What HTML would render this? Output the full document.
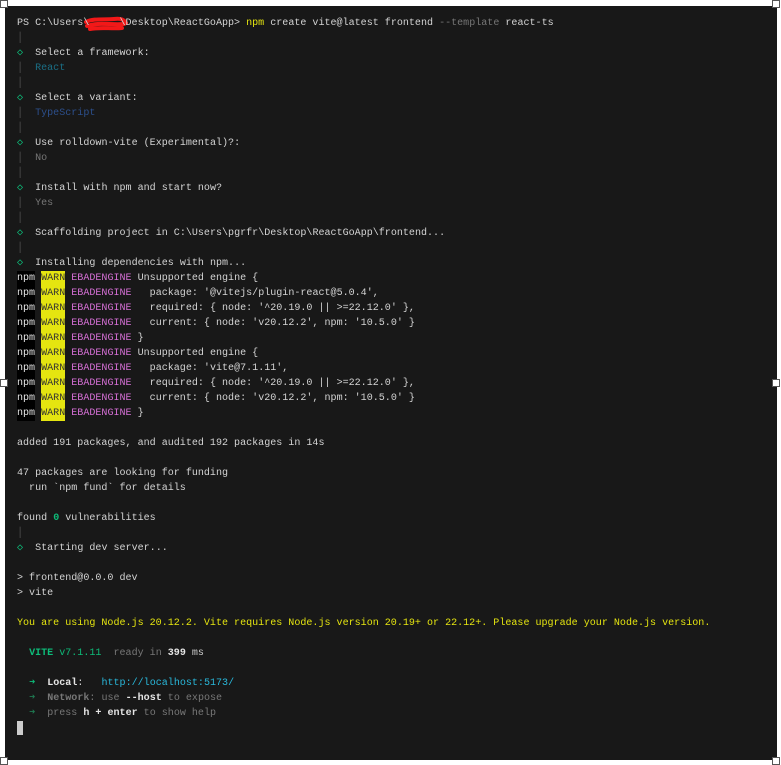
<!DOCTYPE html><html><head><style>
html,body{margin:0;padding:0;background:#fff;width:781px;height:765px;overflow:hidden}
#t{position:absolute;left:5px;top:6px;width:772px;height:754px;background:#181818}
pre{position:absolute;left:17px;top:16px;margin:0;font-family:"Liberation Mono",monospace;font-size:10.05px;line-height:15px;color:#d4d4d4;white-space:pre}
.g{color:#555}.d{color:#0dbc79}.c{color:#1b6f86}.b{color:#2c4f8c}.m{color:#767676}
.y{color:#e5e510}.n{background:#000;color:#e5e5e5;display:inline-block;height:15px}.w{background:#e5e510;color:#333;display:inline-block;height:15px}.p{color:#d670d6}
.B{font-weight:bold;color:#e5e5e5}.gr{color:#0dbc79}.u{color:#29b8db}.dm{color:#777}.da{color:#1f7a52}
.cur{display:inline-block;width:6px;height:14px;background:#ccc;vertical-align:-3px}
.h{position:absolute;width:6px;height:6px;border:1px solid #555;background:#fff}
</style></head><body>
<div id="t"></div>
<div class="h" style="left:0;top:0"></div><div class="h" style="left:772px;top:0"></div>
<div class="h" style="left:0;top:379px"></div><div class="h" style="left:772px;top:379px"></div>
<div class="h" style="left:0;top:757px"></div><div class="h" style="left:772px;top:757px"></div>
<svg style="position:absolute;left:84px;top:16px" width="44" height="16"><path d="M2 6 C10 2 20 4 30 3 S40 5 42 7 M3 10 C14 6 26 9 40 8 M6 13 C16 11 28 13 38 12" stroke="#f21818" stroke-width="4" fill="none" stroke-linecap="round"/></svg>
<pre>PS C:\Users\     \Desktop\ReactGoApp&gt; <span class="y">npm</span> create vite@latest frontend <span class="m">--template</span> react-ts
<span class="g">│</span>
<span class="d">◇</span>  Select a framework:
<span class="g">│</span>  <span class="c">React</span>
<span class="g">│</span>
<span class="d">◇</span>  Select a variant:
<span class="g">│</span>  <span class="b">TypeScript</span>
<span class="g">│</span>
<span class="d">◇</span>  Use rolldown-vite (Experimental)?:
<span class="g">│</span>  <span class="m">No</span>
<span class="g">│</span>
<span class="d">◇</span>  Install with npm and start now?
<span class="g">│</span>  <span class="m">Yes</span>
<span class="g">│</span>
<span class="d">◇</span>  Scaffolding project in C:\Users\pgrfr\Desktop\ReactGoApp\frontend...
<span class="g">│</span>
<span class="d">◇</span>  Installing dependencies with npm...
<span class="n">npm</span> <span class="w">WARN</span> <span class="p">EBADENGINE</span> Unsupported engine {
<span class="n">npm</span> <span class="w">WARN</span> <span class="p">EBADENGINE</span>   package: '@vitejs/plugin-react@5.0.4',
<span class="n">npm</span> <span class="w">WARN</span> <span class="p">EBADENGINE</span>   required: { node: '^20.19.0 || &gt;=22.12.0' },
<span class="n">npm</span> <span class="w">WARN</span> <span class="p">EBADENGINE</span>   current: { node: 'v20.12.2', npm: '10.5.0' }
<span class="n">npm</span> <span class="w">WARN</span> <span class="p">EBADENGINE</span> }
<span class="n">npm</span> <span class="w">WARN</span> <span class="p">EBADENGINE</span> Unsupported engine {
<span class="n">npm</span> <span class="w">WARN</span> <span class="p">EBADENGINE</span>   package: 'vite@7.1.11',
<span class="n">npm</span> <span class="w">WARN</span> <span class="p">EBADENGINE</span>   required: { node: '^20.19.0 || &gt;=22.12.0' },
<span class="n">npm</span> <span class="w">WARN</span> <span class="p">EBADENGINE</span>   current: { node: 'v20.12.2', npm: '10.5.0' }
<span class="n">npm</span> <span class="w">WARN</span> <span class="p">EBADENGINE</span> }

added 191 packages, and audited 192 packages in 14s

47 packages are looking for funding
  run `npm fund` for details

found <span class="gr" style="font-weight:bold">0</span> vulnerabilities
<span class="g">│</span>
<span class="d">◇</span>  Starting dev server...

&gt; frontend@0.0.0 dev
&gt; vite

<span class="y">You are using Node.js 20.12.2. Vite requires Node.js version 20.19+ or 22.12+. Please upgrade your Node.js version.</span>

  <span class="gr" style="font-weight:bold">VITE</span> <span class="gr">v7.1.11</span>  <span class="dm">ready in</span> <span class="B">399</span> <span class="dm" style="color:#ccc">ms</span>

  <span class="gr" style="font-weight:bold">➜</span>  <span class="B">Local</span>:   <span class="u">http://localhost:5173/</span>
  <span class="da" style="font-weight:bold">➜</span>  <span class="dm"><b>Network</b>: use </span><span class="B">--host</span><span class="dm"> to expose</span>
  <span class="da" style="font-weight:bold">➜</span>  <span class="dm">press </span><span class="B">h + enter</span><span class="dm"> to show help</span>
<span class="cur"></span></pre>
</body></html>
